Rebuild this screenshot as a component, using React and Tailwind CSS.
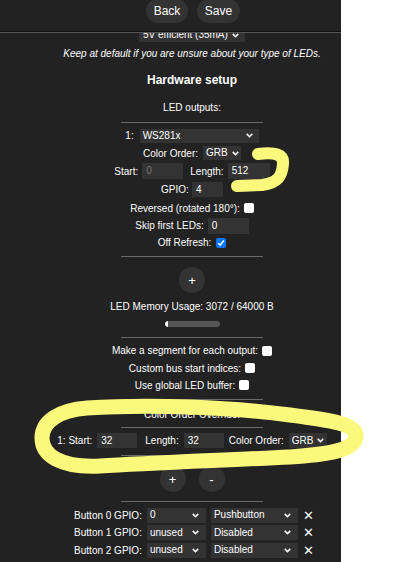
import React from "react";

const font = { fontFamily: '"Liberation Sans", Arial, sans-serif' };

const Chevron = () => (
  <svg width="7" height="5" viewBox="0 0 7 5" className="shrink-0">
    <path d="M0.8 0.9 L3.5 3.7 L6.2 0.9" fill="none" stroke="white" strokeWidth="1.6" />
  </svg>
);

function Select({ value, className = "", chevronGap = false }) {
  return (
    <div
      className={`flex h-[14px] items-center bg-[#333] pl-[3px] pr-[5px] text-white ${
        chevronGap ? "gap-[4px]" : "justify-between"
      } ${className}`}
    >
      <span className="leading-none">{value}</span>
      <Chevron />
    </div>
  );
}

function Input({ value, className = "", muted = false }) {
  return (
    <div
      className={`flex h-[15px] items-center bg-[#333] pl-[4px] leading-none ${
        muted ? "text-[#777]" : "text-white"
      } ${className}`}
    >
      {value}
    </div>
  );
}

function Checkbox({ checked = false }) {
  if (checked) {
    return (
      <span className="flex h-[10px] w-[10px] items-center justify-center rounded-[2px] bg-[#0075ff]">
        <svg width="8" height="8" viewBox="0 0 8 8">
          <path d="M1.2 4.2 L3.2 6.1 L6.9 1.6" fill="none" stroke="white" strokeWidth="1.5" />
        </svg>
      </span>
    );
  }
  return <span className="block h-[10px] w-[10px] rounded-[2px] bg-white" />;
}

function Row({ h, children, className = "" }) {
  return (
    <div className={`flex items-center justify-center ${h} ${className}`}>{children}</div>
  );
}

function Hr({ h }) {
  return (
    <div className={`flex items-center justify-center ${h}`}>
      <div className="h-px w-[142px] bg-[#6a6a6a]" />
    </div>
  );
}

function RoundBtn({ label }) {
  return (
    <div className="flex h-[26px] w-[26px] items-center justify-center rounded-full bg-[#333] text-[13px] leading-none text-white">
      {label}
    </div>
  );
}

const buttons = [
  { name: "Button 0 GPIO:", pin: "0", type: "Pushbutton" },
  { name: "Button 1 GPIO:", pin: "unused", type: "Disabled" },
  { name: "Button 2 GPIO:", pin: "unused", type: "Disabled" },
];
const buttonRowH = ["h-[24px]", "h-[11px]", "h-[24px]"];

export default function App() {
  return (
    <div className="relative h-[562px] w-[400px] overflow-hidden bg-white text-[10px] text-white" style={font}>
      <div className="flex h-full w-[341px] flex-col overflow-hidden bg-[#222]">
        {/* top bar */}
        <div className="w-[384px] shrink-0 border-b border-[#555]">
          <div className="flex h-[32px] items-start justify-center gap-[9px] border-b border-[#0e0e0e] pl-[2px]">
            <div className="-mt-px flex h-[24px] w-[42px] items-center justify-center rounded-full bg-[#333] text-[12px]">
              Back
            </div>
            <div className="-mt-px flex h-[24px] w-[43px] items-center justify-center rounded-full bg-[#333] text-[12px]">
              Save
            </div>
          </div>
        </div>

        <div className="w-[384px] flex-1 overflow-hidden">
          <Row h="h-[14px]" className="-mt-[5px]">
            <Select value="5V efficient (35mA)" className="w-[106px] pl-[4px]" chevronGap />
          </Row>
          <Row h="h-[22px]">
            <span className="italic">Keep at default if you are unsure about your type of LEDs.</span>
          </Row>
          <Row h="h-[32px]">
            <span className="text-[12px] font-bold">Hardware setup</span>
          </Row>
          <Row h="h-[22px]">
            <span>LED outputs:</span>
          </Row>
          <Hr h="h-[8px]" />

          <Row h="h-[19px]" className="gap-[6px]">
            <span>1:</span>
            <Select value="WS281x" className="w-[119px] pr-[6px]" />
          </Row>
          <Row h="h-[16px]" className="gap-[5px]">
            <span>Color Order:</span>
            <Select value="GRB" className="h-[13px] w-[38px]" chevronGap />
          </Row>
          <Row h="h-[20px]" className="gap-[4px]">
            <span>Start:</span>
            <Input value="0" muted className="h-[16px] w-[41px]" />
            <span className="ml-[3px]">Length:</span>
            <Input value="512" className="h-[16px] w-[42px]" />
          </Row>
          <Row h="h-[17px]" className="gap-[3px]">
            <span>GPIO:</span>
            <Input value="4" className="w-[31px]" />
          </Row>
          <Row h="h-[20px]" className="gap-[4px]">
            <span>Reversed (rotated 180°):</span>
            <Checkbox />
          </Row>
          <Row h="h-[15px]" className="gap-[4px]">
            <span>Skip first LEDs:</span>
            <Input value="0" className="h-[16px] w-[41px]" />
          </Row>
          <Row h="h-[19px]" className="gap-[5px]">
            <span>Off Refresh:</span>
            <Checkbox checked />
          </Row>
          <Hr h="h-[8px]" />

          <Row h="h-[40px]">
            <RoundBtn label="+" />
          </Row>
          <Row h="h-[12px]">
            <span>LED Memory Usage: 3072 / 64000 B</span>
          </Row>
          <Row h="h-[24px]">
            <div className="flex h-[6px] w-[55px] overflow-hidden rounded-full bg-[#555]">
              <div className="h-full w-[3px] rounded-l-full bg-white" />
            </div>
          </Row>
          <Hr h="h-[2px]" />

          <Row h="h-[25px]" className="gap-[4px]">
            <span>Make a segment for each output:</span>
            <Checkbox />
          </Row>
          <Row h="h-[10px]" className="gap-[4px]">
            <span>Custom bus start indices:</span>
            <Checkbox />
          </Row>
          <Row h="h-[24px]" className="gap-[4px]">
            <span>Use global LED buffer:</span>
            <Checkbox />
          </Row>
          <Hr h="h-[4px]" />
          <Row h="h-[25px]" className="pt-[2px]">
            <span>Color Order Override:</span>
          </Row>
          <Hr h="h-[3px]" />
          <Row h="h-[23px]" className="gap-[5px]">
            <span>1: Start:</span>
            <Input value="32" className="w-[40px]" />
            <span className="ml-[3px]">Length:</span>
            <Input value="32" className="w-[40px]" />
            <span>Color Order:</span>
            <Select value="GRB" className="h-[15px] w-[38px]" chevronGap />
          </Row>
          <Hr h="h-[7px]" />
          <Row h="h-[40px]" className="gap-[13px]">
            <RoundBtn label="+" />
            <RoundBtn label="-" />
          </Row>
          <Hr h="h-[4px]" />

          {buttons.map((b, i) => (
            <Row key={b.name} h={buttonRowH[i]} className="gap-[5px] pl-[4px]">
              <span>{b.name}</span>
              <Select value={b.pin} className="h-[15px] w-[59px] pr-[7px]" />
              <Select value={b.type} className="h-[15px] w-[87px] pr-[7px]" />
              <span className="text-[13px] leading-none">✕</span>
            </Row>
          ))}
        </div>
      </div>

      {/* highlighter marks drawn over the page */}
      <svg className="pointer-events-none absolute left-0 top-0" width="400" height="562">
        <path
          d="M258 154 C275 152, 284 154, 283 164 C282 176, 278 183, 262 185 L237 186"
          fill="none"
          stroke="#fbf97c"
          strokeWidth="12"
          strokeLinecap="round"
          strokeLinejoin="round"
        />
        <path
          d="M87 408 C150 404, 230 407, 290 415 C330 420, 358 424, 356 437 C354 452, 320 455, 290 457 C230 460, 150 463, 100 466 C60 468, 42 455, 42 438 C42 421, 60 410, 87 408 Z"
          fill="none"
          stroke="#fbf97c"
          strokeWidth="15"
          strokeLinejoin="round"
        />
      </svg>
    </div>
  );
}
